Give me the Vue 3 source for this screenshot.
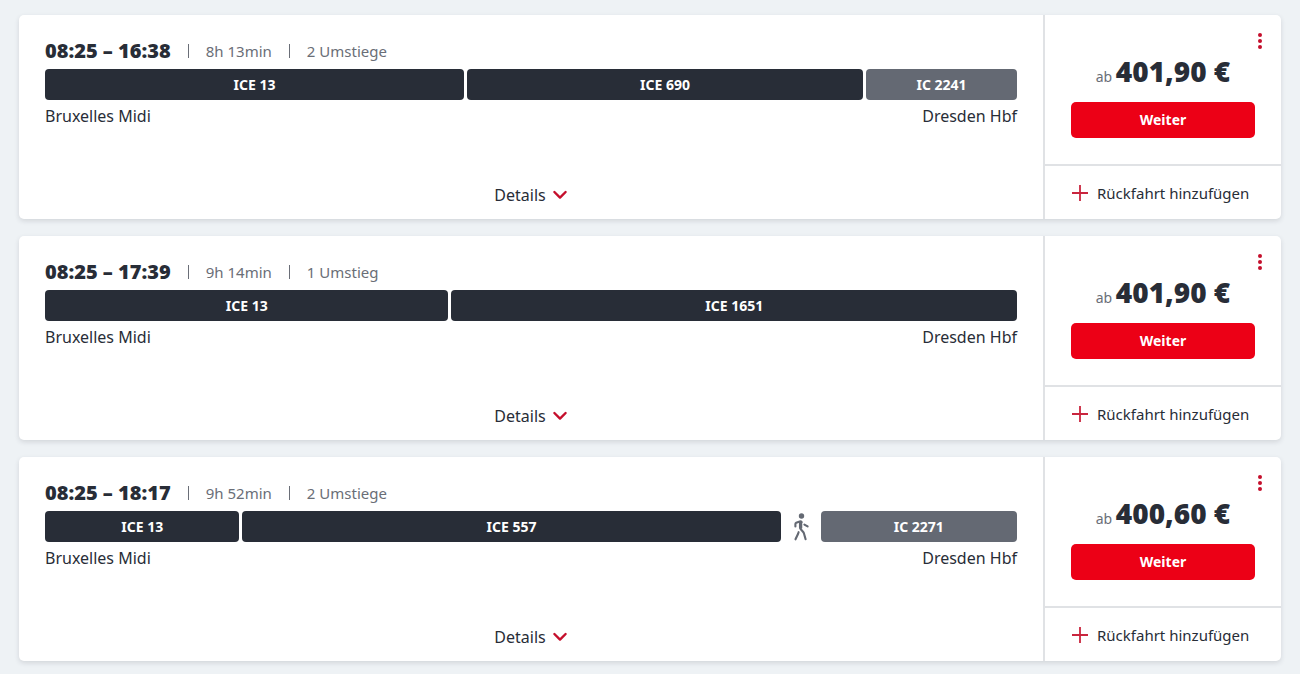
<template>
  <main class="results">
    <article v-for="trip in trips" :key="trip.arrival" class="trip">
      <section class="connection">
        <div class="summary">
          <h2 class="times">{{ trip.departure }} – {{ trip.arrival }}</h2>
          <span class="divider"></span>
          <span>{{ trip.duration }}</span>
          <span class="divider"></span>
          <span>{{ trip.changes }}</span>
        </div>
        <div class="legs">
          <template v-for="leg in trip.legs" :key="leg.name">
            <span v-if="leg.walk" class="walk">
              <svg width="20" height="28" viewBox="0 0 20 28" fill="none" stroke="currentColor" stroke-width="2.1" stroke-linecap="round" stroke-linejoin="round" aria-label="Fußweg">
                <circle cx="10.5" cy="3" r="2.7" fill="currentColor" stroke="none" />
                <path d="M4.4 13.4V11q0-.8.8-1.2L8.8 8.4q1.5-.5 1.9.8M13.4 11.6l3.2 1.8M9 9v5.6q0 .8.6 1.4l2.6 3q.5.6.7 1.3l1.7 6M10.2 9v6M7.6 19.2l-.5 1.6-2.6 5.5" />
              </svg>
            </span>
            <span v-else class="leg" :class="leg.type" :style="{ flexGrow: leg.share }">{{ leg.name }}</span>
          </template>
        </div>
        <div class="stations">
          <span>Bruxelles Midi</span>
          <span>Dresden Hbf</span>
        </div>
        <button type="button" class="details">
          Details
          <svg width="16" height="10" viewBox="0 0 16 10" fill="none" stroke="#c50f2c" stroke-width="2.4" stroke-linecap="round" stroke-linejoin="round" aria-hidden="true">
            <path d="M2.4 2l5.6 5.6L13.6 2" />
          </svg>
        </button>
      </section>
      <aside class="offer">
        <div class="booking">
          <button type="button" class="more" aria-label="Weitere Aktionen">
            <svg width="6" height="18" viewBox="0 0 6 18" fill="#c50f2c" aria-hidden="true">
              <circle cx="3" cy="3" r="2" />
              <circle cx="3" cy="9" r="2" />
              <circle cx="3" cy="15" r="2" />
            </svg>
          </button>
          <p class="price">ab <strong>{{ trip.price }}</strong></p>
          <button type="button" class="next">Weiter</button>
        </div>
        <button type="button" class="return">
          <svg width="18" height="18" viewBox="0 0 18 18" stroke="#c9253e" stroke-width="1.8" aria-hidden="true">
            <path d="M9 1v16M1 9h16" />
          </svg>
          Rückfahrt hinzufügen
        </button>
      </aside>
    </article>
  </main>
</template>

<script setup>
const trips = [
  {
    departure: '08:25',
    arrival: '16:38',
    duration: '8h 13min',
    changes: '2 Umstiege',
    price: '401,90 €',
    legs: [
      { name: 'ICE 13', type: 'ice', share: 419 },
      { name: 'ICE 690', type: 'ice', share: 396 },
      { name: 'IC 2241', type: 'ic', share: 151 },
    ],
  },
  {
    departure: '08:25',
    arrival: '17:39',
    duration: '9h 14min',
    changes: '1 Umstieg',
    price: '401,90 €',
    legs: [
      { name: 'ICE 13', type: 'ice', share: 403 },
      { name: 'ICE 1651', type: 'ice', share: 565 },
    ],
  },
  {
    departure: '08:25',
    arrival: '18:17',
    duration: '9h 52min',
    changes: '2 Umstiege',
    price: '400,60 €',
    legs: [
      { name: 'ICE 13', type: 'ice', share: 194 },
      { name: 'ICE 557', type: 'ice', share: 537 },
      { name: 'walk', walk: true },
      { name: 'IC 2271', type: 'ic', share: 196 },
    ],
  },
]
</script>

<style>
body {
  background: #eef2f5;
}
</style>

<style scoped>
.results {
  display: flex;
  flex-direction: column;
  gap: 17px;
  padding: 15px 19px 13px;
  color: #282d37;
  font-family: "Noto Sans", sans-serif;
  font-size: 15px;
  line-height: 24px;
}
button {
  padding: 0;
  border: none;
  background: none;
  color: inherit;
  font: inherit;
  cursor: pointer;
}
.trip {
  display: flex;
  min-height: 204px;
  border-radius: 5px;
  background: #fff;
  box-shadow: 0 2px 5px rgba(40, 45, 55, 0.14);
}
.connection {
  flex: 1;
  display: flex;
  flex-direction: column;
  padding: 24px 26px 12px;
}
.summary {
  display: flex;
  align-items: center;
  gap: 17px;
  height: 24px;
  margin-bottom: 6px;
  color: #6a6e77;
}
.times {
  margin: 0;
  color: #282d37;
  font-size: 20px;
  font-weight: 900;
}
.divider {
  width: 1px;
  height: 14px;
  background: #6a6e77;
}
.legs {
  display: flex;
  gap: 3px;
}
.leg {
  flex: 1 1 0;
  height: 31px;
  border-radius: 4px;
  color: #fff;
  font-size: 14px;
  font-weight: 700;
  line-height: 31px;
  text-align: center;
}
.ice {
  background: #282d37;
}
.ic {
  background: #646973;
}
.walk {
  display: flex;
  align-items: center;
  justify-content: center;
  width: 34px;
  color: #646973;
}
.stations {
  display: flex;
  justify-content: space-between;
  margin-top: 4px;
  font-size: 16px;
}
.details {
  display: flex;
  align-items: center;
  align-self: center;
  gap: 6px;
  margin-top: auto;
  font-size: 16px;
}
.offer {
  display: flex;
  flex-direction: column;
  width: 236px;
  border-left: 2px solid #e0e2e5;
}
.booking {
  position: relative;
  flex: 1;
  padding: 36px 26px 26px;
  border-bottom: 2px solid #e0e2e5;
}
.more {
  position: absolute;
  top: 17px;
  right: 18px;
  display: flex;
}
.price {
  margin: 0 0 5px;
  color: #6a6e77;
  font-size: 14px;
  line-height: 40px;
  text-align: center;
}
.price strong {
  color: #282d37;
  font-size: 28px;
  font-weight: 900;
}
.next {
  width: 100%;
  height: 36px;
  border-radius: 5px;
  background: #ec0016;
  color: #fff;
  font-size: 14px;
  font-weight: 700;
}
.return {
  display: flex;
  align-items: center;
  gap: 8px;
  height: 53px;
  padding: 0 26px;
  white-space: nowrap;
}
</style>
